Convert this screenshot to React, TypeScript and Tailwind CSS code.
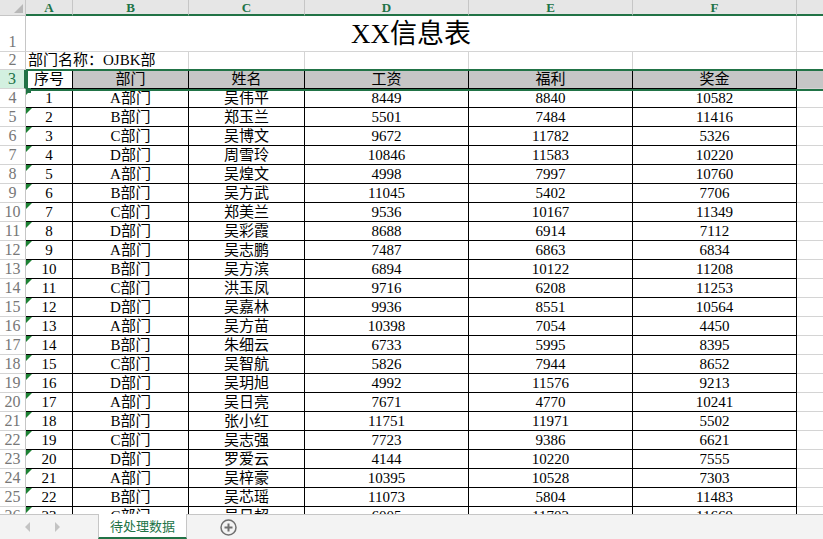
import React from 'react';

const COLS = ['w-[47px]', 'w-[116px]', 'w-[116px]', 'w-[164px]', 'w-[164px]', 'w-[164px]'];
const LETTERS = ['A', 'B', 'C', 'D', 'E', 'F'];
const HEADS = ['序号', '部门', '姓名', '工资', '福利', '奖金'];

const data: (string | number)[][] = [
  [1, 'A部门', '吴伟平', 8449, 8840, 10582],
  [2, 'B部门', '郑玉兰', 5501, 7484, 11416],
  [3, 'C部门', '吴博文', 9672, 11782, 5326],
  [4, 'D部门', '周雪玲', 10846, 11583, 10220],
  [5, 'A部门', '吴煌文', 4998, 7997, 10760],
  [6, 'B部门', '吴方武', 11045, 5402, 7706],
  [7, 'C部门', '郑美兰', 9536, 10167, 11349],
  [8, 'D部门', '吴彩霞', 8688, 6914, 7112],
  [9, 'A部门', '吴志鹏', 7487, 6863, 6834],
  [10, 'B部门', '吴方滨', 6894, 10122, 11208],
  [11, 'C部门', '洪玉凤', 9716, 6208, 11253],
  [12, 'D部门', '吴嘉林', 9936, 8551, 10564],
  [13, 'A部门', '吴方苗', 10398, 7054, 4450],
  [14, 'B部门', '朱细云', 6733, 5995, 8395],
  [15, 'C部门', '吴智航', 5826, 7944, 8652],
  [16, 'D部门', '吴玥旭', 4992, 11576, 9213],
  [17, 'A部门', '吴日亮', 7671, 4770, 10241],
  [18, 'B部门', '张小红', 11751, 11971, 5502],
  [19, 'C部门', '吴志强', 7723, 9386, 6621],
  [20, 'D部门', '罗爱云', 4144, 10220, 7555],
  [21, 'A部门', '吴梓豪', 10395, 10528, 7303],
  [22, 'B部门', '吴芯瑶', 11073, 5804, 11483],
  [23, 'C部门', '吴日超', 6005, 11702, 11669],
];

const RowHead = ({ n, active = false }: { n: number; active?: boolean }) =>
  active ? (
    <div className="w-[26px] shrink-0 flex items-end justify-center bg-[#d3f0e0] text-[#217346] border-r-2 border-r-[#217346] border-b border-b-[#d4d4d4] text-[16px] leading-[18px]">
      {n}
    </div>
  ) : (
    <div className="w-[26px] shrink-0 flex items-end justify-center text-[#777777] border-r border-r-[#c6c6c6] border-b border-b-[#d4d4d4] text-[16px] leading-[18px]">
      {n}
    </div>
  );

export default function App() {
  return (
    <div className="w-[823px] h-[539px] overflow-hidden bg-white flex flex-col font-['Liberation_Serif','Noto_Sans_CJK_SC',serif] text-black">
      {/* column letters */}
      <div className="flex h-[16px] shrink-0 bg-[#e6e6e6]">
        <div className="w-[26px] shrink-0 relative border-r border-b border-[#c6c6c6]">
          <div className="absolute right-[2px] bottom-[2px] w-0 h-0 border-l-[9px] border-l-transparent border-b-[9px] border-b-[#b8b8b8]" />
        </div>
        {LETTERS.map((l, i) => (
          <div
            key={l}
            className={`${COLS[i]} shrink-0 flex items-center justify-center border-r border-r-[#c6c6c6] border-b-2 border-b-[#217346] text-[13px] font-bold text-[#217346] leading-none`}
          >
            {l}
          </div>
        ))}
        <div className="flex-1 border-b-2 border-b-[#217346]" />
      </div>

      {/* sheet */}
      <div className="flex-1 relative overflow-hidden">
        {/* row 1 */}
        <div className="flex h-[36px]">
          <RowHead n={1} />
          <div className="w-[771px] shrink-0 flex items-end justify-center border-r border-b border-[#d4d4d4] text-[27px] leading-[34px]">
            XX信息表
          </div>
          <div className="flex-1 border-b border-[#d4d4d4]" />
        </div>

        {/* row 2 */}
        <div className="flex h-[18px]">
          <RowHead n={2} />
          <div className="w-[163px] shrink-0 flex items-end whitespace-nowrap pl-[2px] border-r border-b border-[#d4d4d4] text-[15px] leading-[18px]">
            部门名称：OJBK部
          </div>
          {COLS.slice(2).map((w, i) => (
            <div key={i} className={`${w} shrink-0 border-r border-b border-[#d4d4d4]`} />
          ))}
          <div className="flex-1 border-b border-[#d4d4d4]" />
        </div>

        {/* row 3 - table head */}
        <div className="flex h-[19px]">
          <RowHead n={3} active />
          {HEADS.map((h, i) => (
            <div
              key={h}
              className={`${COLS[i]} shrink-0 flex items-end justify-center border-r border-b border-black text-[15px] leading-[18px] ${i === 0 ? 'bg-white' : 'bg-[#c6c6c6]'}`}
            >
              {h}
            </div>
          ))}
          <div className="flex-1 bg-[#c6c6c6] border-b border-[#d4d4d4]" />
        </div>

        {/* data rows */}
        {data.map((r, ri) => (
          <div key={ri} className="flex h-[19px]">
            <RowHead n={ri + 4} />
            {r.map((v, ci) => (
              <div
                key={ci}
                className={`${COLS[ci]} shrink-0 relative flex items-end justify-center border-r border-b border-black text-[15px] leading-[18px]`}
              >
                {ci === 0 && (
                  <div className="absolute top-0 left-0 w-0 h-0 border-t-[6px] border-t-[#1d8234] border-r-[6px] border-r-transparent" />
                )}
                {v}
              </div>
            ))}
            <div className="flex-1 border-b border-[#d4d4d4]" />
          </div>
        ))}

        {/* selection of row 3 */}
        <div className="absolute left-[26px] right-0 top-[53px] h-[22px] border-2 border-r-0 border-[#217346]" />
        <div className="absolute left-[26px] top-[72px] w-[5px] h-[5px] bg-[#217346]" />
      </div>

      {/* sheet tabs */}
      <div className="h-[25px] shrink-0 flex bg-[#f3f3f3] border-t border-[#c6c6c6]">
        <div className="w-[98px] shrink-0 flex items-center pl-[25px] gap-[25px]">
          <div className="w-0 h-0 border-y-[5px] border-y-transparent border-r-[5px] border-r-[#c3c3c3]" />
          <div className="w-0 h-0 border-y-[5px] border-y-transparent border-l-[5px] border-l-[#c3c3c3]" />
        </div>
        <div className="w-[89px] shrink-0 -mt-px flex items-center justify-center bg-white border-x border-[#c6c6c6] border-b-2 border-b-[#217346] text-[#217346] text-[13px] font-['Noto_Sans_CJK_SC',sans-serif]">
          待处理数据
        </div>
        <div className="flex items-center pl-[33px]">
          <svg width="17" height="17" viewBox="0 0 17 17">
            <circle cx="8.5" cy="8.5" r="7.5" fill="none" stroke="#707070" strokeWidth="1.5" />
            <path d="M8.5 4.5v8M4.5 8.5h8" stroke="#707070" strokeWidth="2" />
          </svg>
        </div>
      </div>
    </div>
  );
}
